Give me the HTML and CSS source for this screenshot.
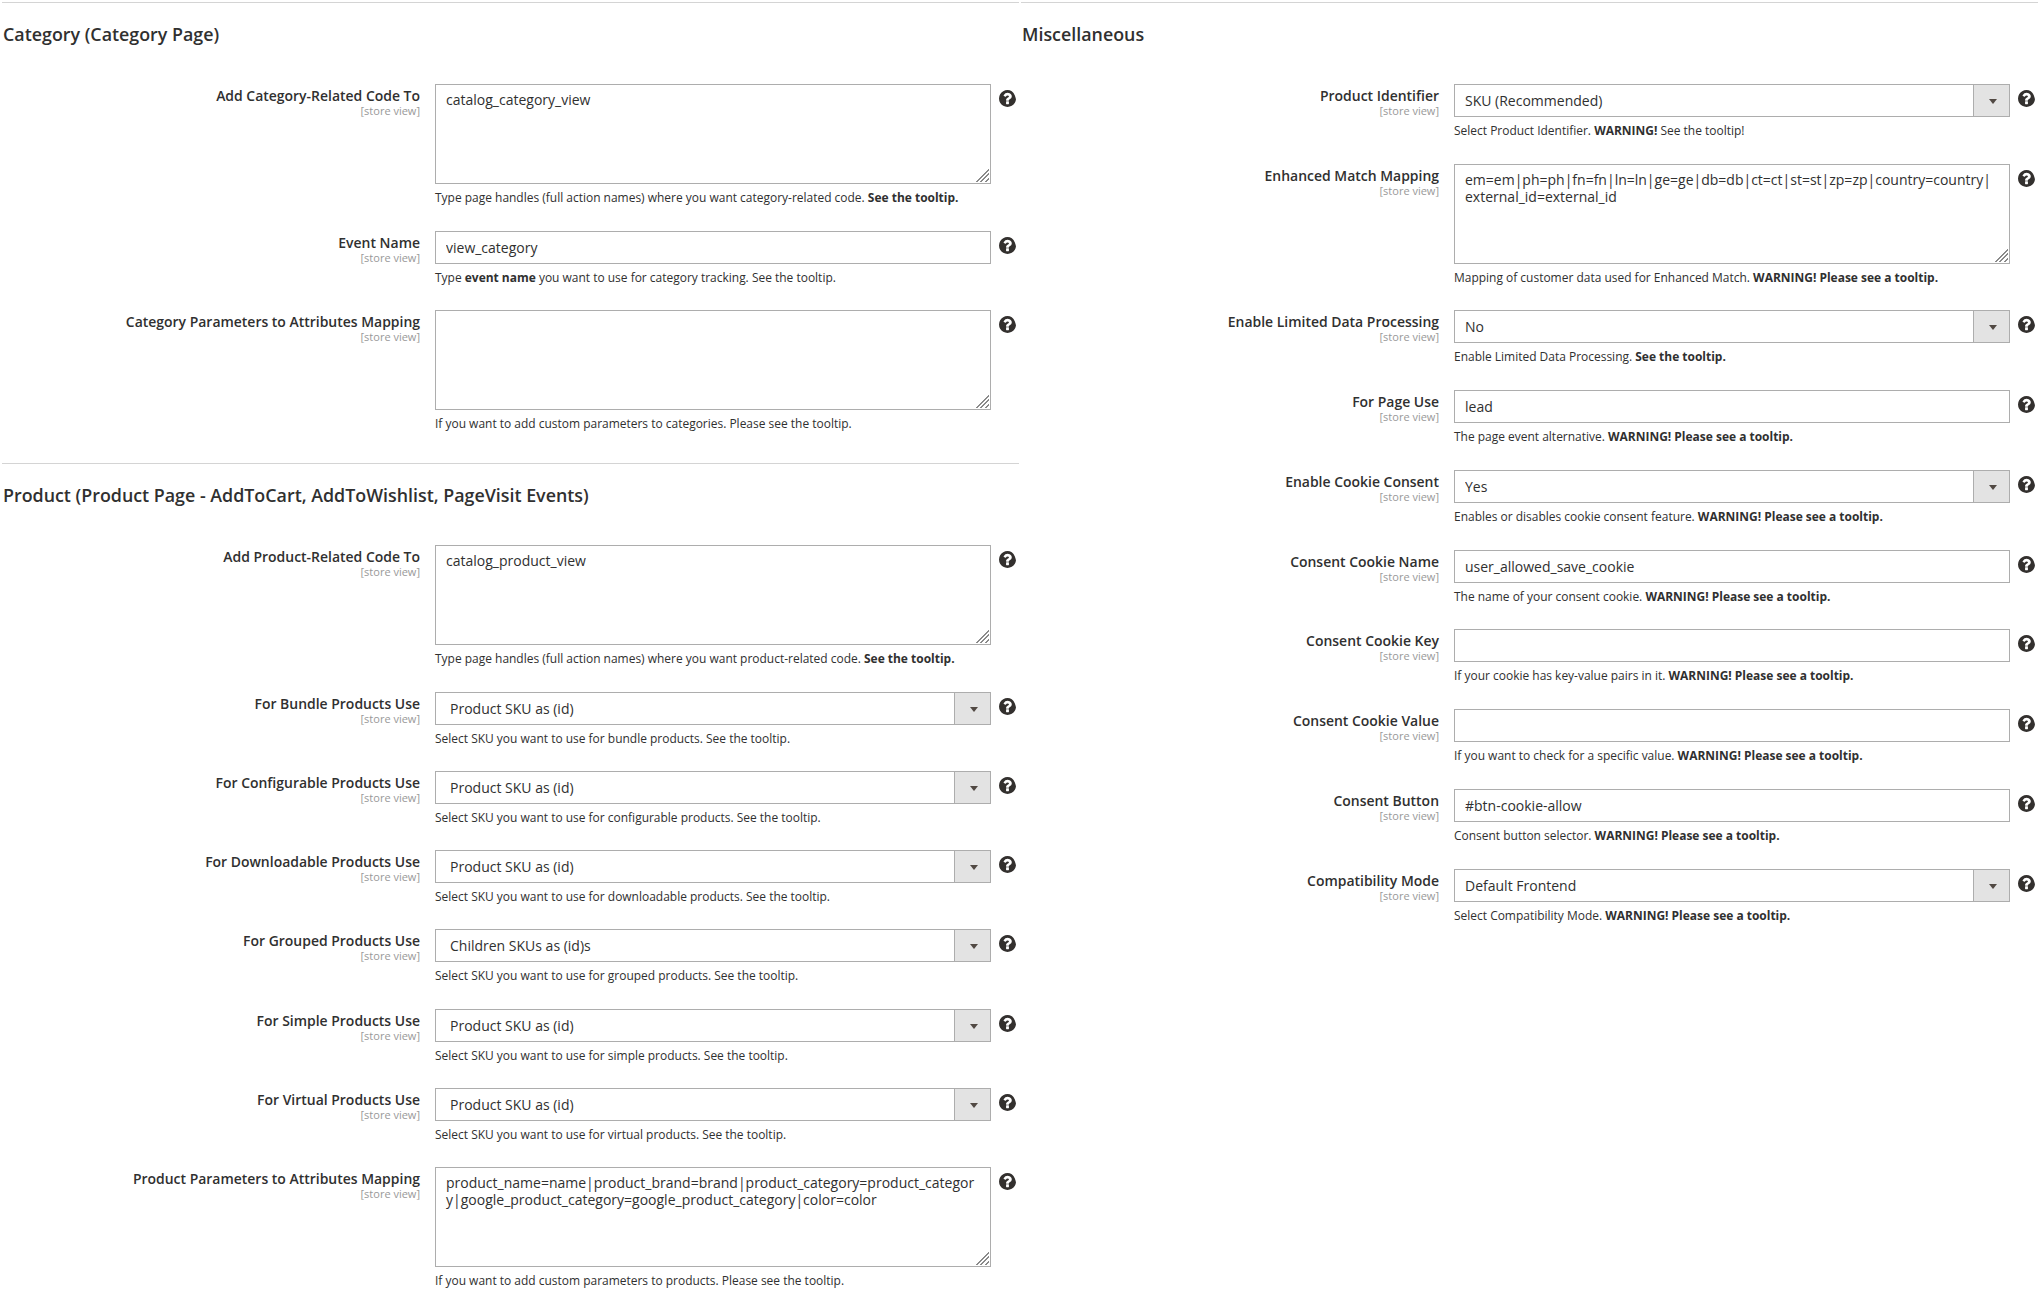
FILE: index.html
```html
<!DOCTYPE html>
<html lang="en">
<head>
<meta charset="utf-8">
<title>Configuration</title>
<link rel="stylesheet" href="styles.css">
</head>
<body>
<svg class="defs" width="0" height="0" aria-hidden="true"><symbol id="help" viewBox="128 128 1536 1536"><path d="M1024 1376v-192q0-14-9-23t-23-9h-192q-14 0-23 9t-9 23v192q0 14 9 23t23 9h192q14 0 23-9t9-23zm256-672q0-88-55.5-163t-138.5-116-170-41q-243 0-371 213-15 24 8 42l132 100q7 6 19 6 16 0 25-12 53-68 86-92 34-24 86-24 48 0 85.5 26t37.5 59q0 38-20 61t-68 45q-63 28-115.5 86.5t-52.5 125.5v36q0 14 9 23t23 9h192q14 0 23-9t9-23q0-19 21.5-49.5t54.5-49.5q32-18 49-28.5t46-35 44.5-48 28-60.5 12.5-81zm384 192q0 209-103 385.5t-279.5 279.5-385.5 103-385.5-103-279.5-279.5-103-385.5 103-385.5 279.5-279.5 385.5-103 385.5 103 279.5 385.5 103 385.5z"/></symbol></svg>
<main class="page">
<div class="col col-left">
<section class="section">
<h2 class="title">Category (Category Page)</h2>
<div class="row row-ta"><div class="label">Add Category-Related Code To<span class="scope">[store view]</span></div><div class="field"><div class="ta-wrap"><textarea class="ctl ta">catalog_category_view</textarea></div><p class="note">Type page handles (full action names) where you want category-related code. <b>See the tooltip.</b></p></div><svg class="help"><use href="#help"/></svg></div>
<div class="row"><div class="label">Event Name<span class="scope">[store view]</span></div><div class="field"><input class="ctl inp" value="view_category"><p class="note">Type <b>event name</b> you want to use for category tracking. See the tooltip.</p></div><svg class="help"><use href="#help"/></svg></div>
<div class="row row-ta"><div class="label">Category Parameters to Attributes Mapping<span class="scope">[store view]</span></div><div class="field"><div class="ta-wrap"><textarea class="ctl ta"></textarea></div><p class="note">If you want to add custom parameters to categories. Please see the tooltip.</p></div><svg class="help"><use href="#help"/></svg></div>
</section>
<section class="section">
<h2 class="title">Product (Product Page - AddToCart, AddToWishlist, PageVisit Events)</h2>
<div class="row row-ta"><div class="label">Add Product-Related Code To<span class="scope">[store view]</span></div><div class="field"><div class="ta-wrap"><textarea class="ctl ta">catalog_product_view</textarea></div><p class="note">Type page handles (full action names) where you want product-related code. <b>See the tooltip.</b></p></div><svg class="help"><use href="#help"/></svg></div>
<div class="row"><div class="label">For Bundle Products Use<span class="scope">[store view]</span></div><div class="field"><div class="sel"><select class="ctl slc"><option>Product SKU as (id)</option></select></div><p class="note">Select SKU you want to use for bundle products. See the tooltip.</p></div><svg class="help"><use href="#help"/></svg></div>
<div class="row"><div class="label">For Configurable Products Use<span class="scope">[store view]</span></div><div class="field"><div class="sel"><select class="ctl slc"><option>Product SKU as (id)</option></select></div><p class="note">Select SKU you want to use for configurable products. See the tooltip.</p></div><svg class="help"><use href="#help"/></svg></div>
<div class="row"><div class="label">For Downloadable Products Use<span class="scope">[store view]</span></div><div class="field"><div class="sel"><select class="ctl slc"><option>Product SKU as (id)</option></select></div><p class="note">Select SKU you want to use for downloadable products. See the tooltip.</p></div><svg class="help"><use href="#help"/></svg></div>
<div class="row"><div class="label">For Grouped Products Use<span class="scope">[store view]</span></div><div class="field"><div class="sel"><select class="ctl slc"><option>Children SKUs as (id)s</option></select></div><p class="note">Select SKU you want to use for grouped products. See the tooltip.</p></div><svg class="help"><use href="#help"/></svg></div>
<div class="row"><div class="label">For Simple Products Use<span class="scope">[store view]</span></div><div class="field"><div class="sel"><select class="ctl slc"><option>Product SKU as (id)</option></select></div><p class="note">Select SKU you want to use for simple products. See the tooltip.</p></div><svg class="help"><use href="#help"/></svg></div>
<div class="row"><div class="label">For Virtual Products Use<span class="scope">[store view]</span></div><div class="field"><div class="sel"><select class="ctl slc"><option>Product SKU as (id)</option></select></div><p class="note">Select SKU you want to use for virtual products. See the tooltip.</p></div><svg class="help"><use href="#help"/></svg></div>
<div class="row row-ta"><div class="label">Product Parameters to Attributes Mapping<span class="scope">[store view]</span></div><div class="field"><div class="ta-wrap"><textarea class="ctl ta">product_name=name|product_brand=brand|product_category=product_category|google_product_category=google_product_category|color=color</textarea></div><p class="note">If you want to add custom parameters to products. Please see the tooltip.</p></div><svg class="help"><use href="#help"/></svg></div>
</section>
</div>
<div class="col col-right">
<section class="section">
<h2 class="title">Miscellaneous</h2>
<div class="row"><div class="label">Product Identifier<span class="scope">[store view]</span></div><div class="field"><div class="sel"><select class="ctl slc"><option>SKU (Recommended)</option></select></div><p class="note">Select Product Identifier. <b>WARNING!</b> See the tooltip!</p></div><svg class="help"><use href="#help"/></svg></div>
<div class="row row-ta"><div class="label">Enhanced Match Mapping<span class="scope">[store view]</span></div><div class="field"><div class="ta-wrap"><textarea class="ctl ta">em=em|ph=ph|fn=fn|ln=ln|ge=ge|db=db|ct=ct|st=st|zp=zp|country=country|external_id=external_id</textarea></div><p class="note">Mapping of customer data used for Enhanced Match. <b>WARNING! Please see a tooltip.</b></p></div><svg class="help"><use href="#help"/></svg></div>
<div class="row"><div class="label">Enable Limited Data Processing<span class="scope">[store view]</span></div><div class="field"><div class="sel"><select class="ctl slc"><option>No</option></select></div><p class="note">Enable Limited Data Processing. <b>See the tooltip.</b></p></div><svg class="help"><use href="#help"/></svg></div>
<div class="row"><div class="label">For Page Use<span class="scope">[store view]</span></div><div class="field"><input class="ctl inp" value="lead"><p class="note">The page event alternative. <b>WARNING! Please see a tooltip.</b></p></div><svg class="help"><use href="#help"/></svg></div>
<div class="row"><div class="label">Enable Cookie Consent<span class="scope">[store view]</span></div><div class="field"><div class="sel"><select class="ctl slc"><option>Yes</option></select></div><p class="note">Enables or disables cookie consent feature. <b>WARNING! Please see a tooltip.</b></p></div><svg class="help"><use href="#help"/></svg></div>
<div class="row"><div class="label">Consent Cookie Name<span class="scope">[store view]</span></div><div class="field"><input class="ctl inp" value="user_allowed_save_cookie"><p class="note">The name of your consent cookie. <b>WARNING! Please see a tooltip.</b></p></div><svg class="help"><use href="#help"/></svg></div>
<div class="row"><div class="label">Consent Cookie Key<span class="scope">[store view]</span></div><div class="field"><input class="ctl inp" value=""><p class="note">If your cookie has key-value pairs in it. <b>WARNING! Please see a tooltip.</b></p></div><svg class="help"><use href="#help"/></svg></div>
<div class="row"><div class="label">Consent Cookie Value<span class="scope">[store view]</span></div><div class="field"><input class="ctl inp" value=""><p class="note">If you want to check for a specific value. <b>WARNING! Please see a tooltip.</b></p></div><svg class="help"><use href="#help"/></svg></div>
<div class="row"><div class="label">Consent Button<span class="scope">[store view]</span></div><div class="field"><input class="ctl inp" value="#btn-cookie-allow"><p class="note">Consent button selector. <b>WARNING! Please see a tooltip.</b></p></div><svg class="help"><use href="#help"/></svg></div>
<div class="row"><div class="label">Compatibility Mode<span class="scope">[store view]</span></div><div class="field"><div class="sel"><select class="ctl slc"><option>Default Frontend</option></select></div><p class="note">Select Compatibility Mode. <b>WARNING! Please see a tooltip.</b></p></div><svg class="help"><use href="#help"/></svg></div>
</section>
</div>
</main>
</body>
</html>
```
FILE: styles.css
```css
* { box-sizing: border-box; }
html, body { margin: 0; padding: 0; background: #fff; }
body { font-family: "Open Sans", sans-serif; color: #303030; font-size: 14px; overflow: hidden; }
.defs { display: block; }
.page { display: grid; grid-template-columns: 1017px 1fr; column-gap: 2px; padding: 2px 0 0 2px; height: 1302px; overflow: hidden; }
.section { border-top: 1.5px solid #d4d4d4; }
.col-left .section + .section { margin-top: 6px; }
.title { margin: 0; padding: 19px 0 0 1px; font-size: 17.85px; line-height: 24px; font-weight: 600; color: #303030; height: 81px; }
.section + .section .title { height: 80.7px; }
.row { display: grid; grid-template-columns: 425px 556px 17px; column-gap: 8px; }
.col-left .row { padding-bottom: 23.2px; }
.col-left .row-ta { padding-bottom: 24px; }
.col-right .row { padding-bottom: 23.9px; }
.col-right .row-ta { padding-bottom: 23px; }
.label { padding: 2px 7px 0 0; text-align: right; font-size: 13.96px; line-height: 20px; font-weight: 600; color: #303030; }
.scope { display: block; font-size: 11px; line-height: 10px; font-weight: 400; color: #999; }
.field { min-width: 0; }
.ctl { display: block; width: 100%; margin: 0; border: 1px solid #adadad; border-radius: 0; background: #fff; font-family: "Open Sans", sans-serif; font-size: 14px; color: #303030; outline: none; }
.inp { height: 33px; padding: 0 10px; }
.ta-wrap { position: relative; height: 100px; }
.ta-wrap::after { content: ""; position: absolute; right: 2px; bottom: 2px; width: 15px; height: 15px; background: repeating-linear-gradient(135deg, transparent 0 2px, #8a8a8a 2px 3.2px); clip-path: polygon(100% 0, 100% 100%, 0 100%); pointer-events: none; }
.ta { height: 100px; padding: 6px 12px 6px 10px; line-height: 17px; resize: none; word-break: break-all; }
.sel { position: relative; height: 33px; }
.sel::before { content: ""; position: absolute; top: 0; right: 0; bottom: 0; width: 35px; background: #e3e3e3; border: 1px solid #adadad; pointer-events: none; z-index: 1; }
.sel::after { content: ""; position: absolute; top: 15px; right: 13px; border-style: solid; border-width: 5px 4.5px 0; border-color: #514943 transparent transparent; pointer-events: none; z-index: 2; }
.slc { height: 33px; padding: 0 40px 0 10px; appearance: none; -webkit-appearance: none; }
.col-left .slc { padding-left: 14px; }
.note { margin: 5px 0 0; font-size: 11.97px; line-height: 18px; color: #303030; }
.note b { font-weight: 700; }
.help { display: block; width: 17px; height: 17px; margin-top: 6px; fill: #33302e; }
```
